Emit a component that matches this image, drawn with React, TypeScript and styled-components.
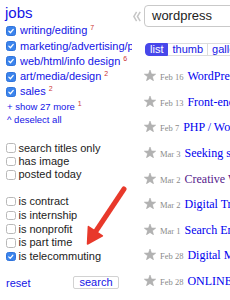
import styled, { createGlobalStyle } from 'styled-components';

const LINK = '#1414e6';

const GlobalStyle = createGlobalStyle`
  html, body {
    margin: 0;
    padding: 0;
    background: #fff;
  }
  body {
    font-family: "Liberation Sans", Arial, sans-serif;
  }
`;

const categories = [
  { name: 'writing/editing', count: 7 },
  { name: 'marketing/advertising/pr', count: 0 },
  { name: 'web/html/info design', count: 6 },
  { name: 'art/media/design', count: 2 },
  { name: 'sales', count: 2 },
];

const options = [
  { name: 'search titles only', on: false },
  { name: 'has image', on: false },
  { name: 'posted today', on: false },
];

const attributes = [
  { name: 'is contract', on: false },
  { name: 'is internship', on: false },
  { name: 'is nonprofit', on: false },
  { name: 'is part time', on: false },
  { name: 'is telecommuting', on: true },
];

const postings = [
  { date: 'Feb 16', title: 'WordPress Developer' },
  { date: 'Feb 13', title: 'Front-end Developer' },
  { date: 'Feb 7', title: 'PHP / WordPress Developer' },
  { date: 'Mar 3', title: 'Seeking senior developer' },
  { date: 'Mar 2', title: 'Creative Writer', visited: true },
  { date: 'Mar 2', title: 'Digital Transformation' },
  { date: 'Mar 1', title: 'Search Engine Marketing' },
  { date: 'Feb 28', title: 'Digital Marketing Manager' },
  { date: 'Feb 28', title: 'ONLINE MARKETING' },
  { date: 'Feb 27', title: 'Web Developer' },
];

const Check = ({ on, size }: { on: boolean; size: number }) => (
  <Box $on={on} $size={size}>
    {on && (
      <svg width={size - 2} height={size - 2} viewBox="0 0 10 10">
        <polyline points="2.3,5.2 4.3,7.2 7.8,3" fill="none" stroke="#fff" strokeWidth="1.6" strokeLinecap="round" strokeLinejoin="round" />
      </svg>
    )}
  </Box>
);

const Star = () => (
  <StarIcon width="12" height="11" viewBox="0 0 12 11">
    <polygon
      points="6,0 7.47,3.98 11.71,4.15 8.38,6.77 9.53,10.85 6,8.5 2.47,10.85 3.62,6.77 0.29,4.15 4.53,3.98"
      fill="#b2b2b2"
      stroke="#a4a4a4"
      strokeWidth="0.5"
    />
  </StarIcon>
);

const App = () => (
  <>
    <GlobalStyle />
    <Page>
      <Sidebar>
        <Heading>jobs</Heading>
        <CheckList $top={1.4}>
          {categories.map(c => (
            <CheckRow key={c.name} $h={15.2} $gap={4}>
              <Check on size={10} />
              <Label $link>
                {c.name}
                {c.count > 0 && <Count>{c.count}</Count>}
              </Label>
            </CheckRow>
          ))}
        </CheckList>
        <MoreLinks>
          <MoreLink>+ show 27 more<Count>1</Count></MoreLink>
          <MoreLink>^ deselect all</MoreLink>
        </MoreLinks>
        <CheckList $top={15}>
          {options.map(o => (
            <CheckRow key={o.name} $h={13.4} $gap={3}>
              <Check on={o.on} size={9.5} />
              <Label>{o.name}</Label>
            </CheckRow>
          ))}
        </CheckList>
        <CheckList $top={13.1}>
          {attributes.map(a => (
            <CheckRow key={a.name} $h={13.75} $gap={3}>
              <Check on={a.on} size={9.5} />
              <Label>{a.name}</Label>
            </CheckRow>
          ))}
        </CheckList>
        <Footer>
          <Reset>reset</Reset>
          <SearchButton>search</SearchButton>
        </Footer>
      </Sidebar>

      <Results>
        <SearchBar>
          <svg width="8" height="11" viewBox="0 0 8 11" style={{ marginLeft: 1, flex: 'none' }}>
            <polyline points="3.6,0.8 0.8,5.5 3.6,10.2" fill="none" stroke="#c6c6c6" strokeWidth="1.5" />
            <polyline points="7.2,0.8 4.4,5.5 7.2,10.2" fill="none" stroke="#c6c6c6" strokeWidth="1.5" />
          </svg>
          <Query>wordpress</Query>
        </SearchBar>
        <Tabs>
          <Tab $active>list</Tab>
          <Tab>thumb</Tab>
          <Tab>gallery</Tab>
        </Tabs>
        <Postings>
          {postings.map((p, i) => (
            <Posting key={i}>
              <Star />
              <PostDate>{p.date}</PostDate>
              <PostTitle $visited={p.visited}>{p.title}</PostTitle>
            </Posting>
          ))}
        </Postings>
      </Results>

      <Arrow width="230" height="300" viewBox="0 0 230 300">
        <line x1="124" y1="189" x2="96" y2="231" stroke="#e8392b" strokeWidth="5" strokeLinecap="round" />
        <polygon points="87.5,244 88.4,226.6 102.4,235.8" fill="#e8392b" stroke="#e8392b" strokeWidth="1.5" strokeLinejoin="round" />
      </Arrow>
    </Page>
  </>
);

const Page = styled.div`
  position: relative;
  display: flex;
  width: 230px;
  height: 300px;
  overflow: hidden;
  background: #fff;
`;

const Sidebar = styled.aside`
  flex: none;
  width: 132px;
  padding-left: 5px;
  box-sizing: border-box;
  overflow: hidden;
`;

const Heading = styled.h1`
  margin: 4px 0 0;
  font-size: 15px;
  line-height: 18px;
  font-weight: normal;
  color: ${LINK};
`;

const CheckList = styled.ul<{ $top: number }>`
  list-style: none;
  margin: ${p => p.$top}px 0 0;
  padding: 0;
`;

const CheckRow = styled.li<{ $h: number; $gap: number }>`
  display: flex;
  align-items: center;
  gap: ${p => p.$gap}px;
  height: ${p => p.$h}px;
  padding-left: 1px;
  white-space: nowrap;
`;

const Box = styled.span<{ $on: boolean; $size: number }>`
  flex: none;
  display: flex;
  align-items: center;
  justify-content: center;
  width: ${p => p.$size}px;
  height: ${p => p.$size}px;
  box-sizing: border-box;
  border-radius: 2.5px;
  border: 1px solid ${p => (p.$on ? '#2f73dc' : '#b8b8b8')};
  background: ${p => (p.$on ? '#3b84ec' : '#fff')};
`;

const Label = styled.span<{ $link?: boolean }>`
  font-size: 11px;
  line-height: 13px;
  color: ${p => (p.$link ? LINK : '#222')};
`;

const Count = styled.sup`
  margin-left: 3px;
  font-size: 7px;
  line-height: 0;
  vertical-align: 4px;
  color: #cc3333;
`;

const MoreLinks = styled.div`
  margin-top: 1.1px;
`;

const MoreLink = styled.a`
  display: block;
  padding-left: 2px;
  font-size: 9.5px;
  line-height: 13px;
  color: ${LINK};
`;

const Footer = styled.div`
  display: flex;
  align-items: center;
  justify-content: space-between;
  width: 114px;
  height: 13px;
  margin-top: 13px;
`;

const Reset = styled.a`
  padding-left: 1px;
  font-size: 11px;
  color: ${LINK};
`;

const SearchButton = styled.button`
  width: 46px;
  height: 13px;
  padding: 0;
  box-sizing: border-box;
  font-family: "Liberation Sans", Arial, sans-serif;
  font-size: 11px;
  line-height: 11px;
  color: ${LINK};
  background: #fff;
  border: 1px solid #d2d2d2;
  border-radius: 2px;
`;

const Results = styled.main`
  flex: 1;
  min-width: 0;
  overflow: hidden;
`;

const SearchBar = styled.div`
  display: flex;
  align-items: center;
  gap: 3px;
  height: 22px;
  margin-top: 5px;
`;

const Query = styled.div`
  flex: none;
  width: 130px;
  height: 22px;
  box-sizing: border-box;
  padding-left: 7px;
  border: 1px solid #c9c9c9;
  border-radius: 4px;
  font-size: 13px;
  line-height: 20px;
  color: #222;
`;

const Tabs = styled.div`
  display: flex;
  margin: 16.3px 0 0 13px;
  white-space: nowrap;
`;

const Tab = styled.span<{ $active?: boolean }>`
  padding: 0 4px;
  font-size: 11px;
  line-height: 10.5px;
  border: 1px solid ${p => (p.$active ? '#4747ea' : '#dcdcdc')};
  border-left-width: ${p => (p.$active ? 1 : 0)}px;
  border-radius: ${p => (p.$active ? '4px 0 0 4px' : '0')};
  background: ${p => (p.$active ? '#4747ea' : '#fff')};
  color: ${p => (p.$active ? '#fff' : LINK)};
`;

const Postings = styled.ul`
  list-style: none;
  margin: 6.4px 0 0;
  padding: 0;
`;

const Posting = styled.li`
  height: 25.6px;
  line-height: 25.6px;
  padding-left: 12px;
  white-space: nowrap;
  overflow: hidden;
`;

const StarIcon = styled.svg`
  vertical-align: -1px;
  margin-right: 4px;
`;

const PostDate = styled.span`
  margin-right: 4px;
  font-family: "Liberation Serif", "Times New Roman", serif;
  font-size: 8.5px;
  color: #8a8a8a;
`;

const PostTitle = styled.a<{ $visited?: boolean }>`
  font-family: "Liberation Serif", "Times New Roman", serif;
  font-size: 12px;
  color: ${p => (p.$visited ? '#551a8b' : '#0000ee')};
  text-decoration: none;
`;

const Arrow = styled.svg`
  position: absolute;
  left: 0;
  top: 0;
  pointer-events: none;
`;

export default App;
